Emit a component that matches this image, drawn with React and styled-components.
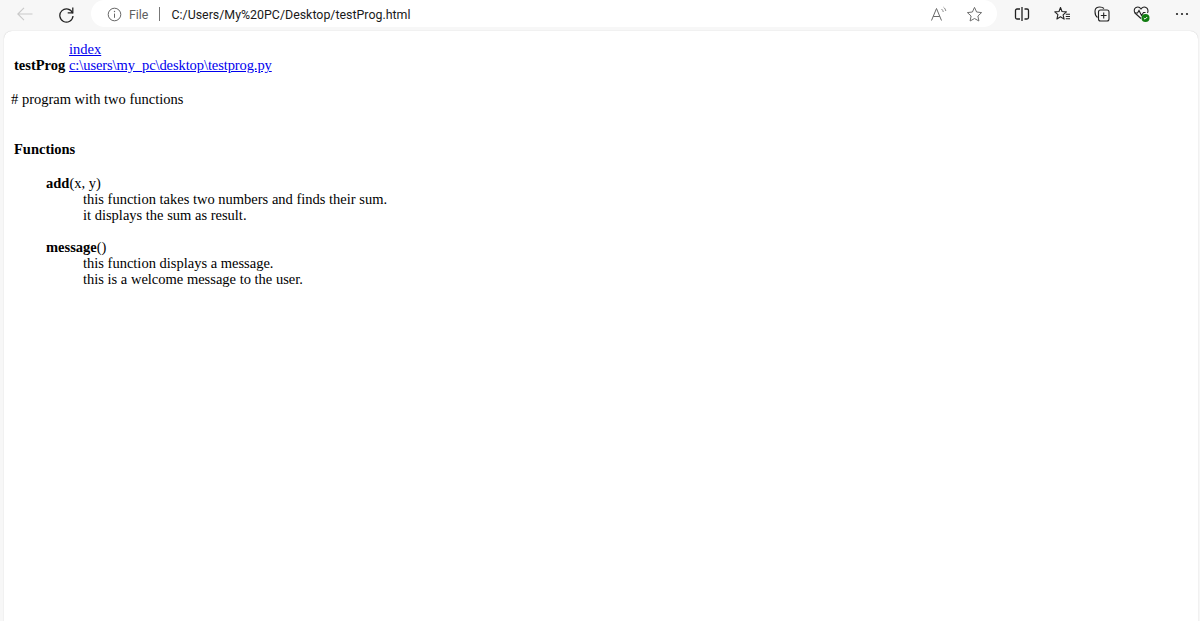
import React from "react";
import styled, { createGlobalStyle } from "styled-components";

const Global = createGlobalStyle`
  html, body { margin: 0; padding: 0; height: 100%; overflow: hidden; background: #f7f7f7; }
  #root { height: 100%; }
`;

const Window = styled.div`
  height: 621px;
  display: flex;
  flex-direction: column;
  background: #f7f7f7;
`;

const Toolbar = styled.header`
  height: 27px;
  padding: 0 0 0 7px;
  display: flex;
  align-items: center;
  flex: none;
`;

const NavButton = styled.div`
  width: 36px;
  height: 27px;
  padding-top: 1px;
  box-sizing: border-box;
  display: flex;
  align-items: center;
  justify-content: center;
  flex: none;
  margin-right: ${(p) => p.$gap || 0}px;
`;

const AddressBar = styled.div`
  width: 906px;
  height: 27px;
  margin-left: 7px;
  background: #fff;
  border-radius: 14px;
  display: flex;
  align-items: center;
  padding: 1px 0 0 16px;
  box-sizing: border-box;
  font-family: Roboto, "Open Sans", sans-serif;
  font-size: 12.4px;
  flex: none;
`;

const Scheme = styled.span`
  color: #5f5f5f;
  margin-left: 7px;
`;

const Separator = styled.span`
  width: 1px;
  height: 14px;
  background: #777;
  margin: 0 11px 0 11px;
`;

const Url = styled.span`
  color: #1a1a1a;
  flex: 1;
`;

const AddressActions = styled.div`
  display: flex;
  align-items: center;
  gap: 18px;
  padding-right: 14px;
`;

const ToolIcons = styled.div`
  display: flex;
  align-items: center;
  margin-left: 5px;
`;

const ToolButton = styled.div`
  width: 40px;
  height: 27px;
  padding-top: 1px;
  box-sizing: border-box;
  display: flex;
  align-items: center;
  justify-content: center;
`;

const Viewport = styled.main`
  flex: 1;
  margin: 4px 2px 0 4px;
  padding: 10px 0 0 0;
  background: #fff;
  border-radius: 8px 8px 0 0;
  box-shadow: 0 0 1px rgba(0, 0, 0, 0.25);
  font-family: "Liberation Serif", "Times New Roman", serif;
  font-size: 14.5px;
  line-height: 16px;
  color: #000;
`;

const Heading = styled.div`
  display: grid;
  grid-template-columns: 61px auto;
  justify-content: start;
  padding-left: 4px;
`;

const Bold = styled.b`
  font-weight: 700;
`;

const HeadingTitle = styled(Bold)`
  padding-left: 6px;
  white-space: nowrap;
`;

const Link = styled.a`
  color: #0000ee;
  text-decoration: underline;
`;

const PathLink = styled(Link)`
  letter-spacing: -0.09px;
`;

const Comment = styled.p`
  margin: 18px 0 0 7px;
`;

const SectionTitle = styled.h2`
  font: inherit;
  font-weight: 700;
  margin: 34px 0 0 10px;
`;

const Entry = styled.dl`
  margin: ${(p) => p.$top}px 0 0 42px;
`;

const EntryName = styled.dt`
  margin: 0;
`;

const EntryDoc = styled.dd`
  margin: 0 0 0 37px;
`;

const ArrowIcon = () => (
  <svg width="20" height="16" viewBox="0 0 20 16" fill="none" stroke="#c9c9c9" strokeWidth="1.1">
    <path d="M17.500 8H2.800M9 1.800 2.800 8 9 14.200" />
  </svg>
);

const RefreshIcon = () => (
  <svg width="17" height="17" viewBox="0 0 17 17" fill="none" stroke="#222" strokeWidth="1.25">
    <path d="M14.600 7.200A6.600 6.600 0 1 0 15 10" />
    <path d="M14.800 1.600v5.200H9.700" />
  </svg>
);

const InfoIcon = () => (
  <svg width="15" height="15" viewBox="0 0 15 15" fill="none" stroke="#666" strokeWidth="1">
    <circle cx="7.500" cy="7.500" r="6.300" />
    <path d="M7.500 6.600v4.200" />
    <circle cx="7.500" cy="4.500" r=".7" fill="#666" stroke="none" />
  </svg>
);

const ReadAloudIcon = () => (
  <svg width="18" height="16" viewBox="0 0 18 16" fill="none" stroke="#6a6a6a" strokeWidth="1">
    <path d="M1.500 14.500 6.500 2.500 11.500 14.500M3.200 10.500h6.600" />
    <path d="M11.500 3c1 .8 1.600 1.800 1.800 3M13.500 1.200c1.300 1 2.100 2.400 2.300 3.800" stroke="#8a8a8a" />
  </svg>
);

const StarIcon = () => (
  <svg width="17" height="17" viewBox="0 0 17 17" fill="none" stroke="#6f6f6f" strokeWidth="1">
    <path d="M8.500 1.400 10.600 6l5 .6-3.700 3.400 1 5-4.400-2.500L4.100 15l1-5L1.400 6.600l5-.6z" strokeLinejoin="round" />
  </svg>
);

const SplitIcon = () => (
  <svg width="16" height="16" viewBox="0 0 16 16" fill="none" stroke="#222" strokeWidth="1.3">
    <path d="M6 3H3a1.500 1.500 0 0 0-1.500 1.500v7A1.500 1.500 0 0 0 3 13h3M10.500 3H13a1.500 1.500 0 0 1 1.500 1.500v7A1.500 1.500 0 0 1 13 13h-2.500M8 1v14" />
  </svg>
);

const FavoritesIcon = () => (
  <svg width="17" height="16" viewBox="0 0 17 16" fill="none" stroke="#222" strokeWidth="1.1">
    <path d="M6.500 1.500 8 5.500l4.400.4-3.300 2.900 1 4.300-3.600-2.300L2.900 13l1-4.300L.8 5.900l4.200-.4z" strokeLinejoin="round" />
    <path d="M11.800 8.200H16M11.800 10.500H16M11.800 12.800H16" />
  </svg>
);

const CollectionsIcon = () => (
  <svg width="16" height="16" viewBox="0 0 16 16" fill="none" stroke="#222" strokeWidth="1.1">
    <path d="M3.500 11.500C2 10.500 1 8 1 5.500 1 3 2 1.500 4 1.200 6 .9 8.500 1.200 10 2.500" />
    <rect x="4.500" y="4" width="10.500" height="11" rx="2" />
    <path d="M9.700 6.500v6M6.800 9.500h5.800" />
  </svg>
);

const HealthIcon = () => (
  <svg width="18" height="18" viewBox="0 0 18 18" fill="none" stroke="#222" strokeWidth="1.1">
    <path d="M8 13.500 2.500 8.500C.5 6.500 1 3.500 3 2.500c2-1 4 0 5 1.500 1-1.500 3.200-2.500 5-1.500 2 1 2.500 3.500 1.500 5.500" />
    <path d="M1.500 8h3l1.500-2.500 2.500 5 2-3h2" />
    <circle cx="12.500" cy="13" r="4" fill="#107c10" stroke="none" />
    <path d="m10.800 13 1.200 1.200 2.200-2.200" stroke="#fff" strokeWidth="1" />
  </svg>
);

const MoreIcon = () => (
  <svg width="14" height="4" viewBox="0 0 14 4" fill="#222">
    <circle cx="2" cy="2" r="1.100" />
    <circle cx="7" cy="2" r="1.100" />
    <circle cx="12" cy="2" r="1.100" />
  </svg>
);

export default function App() {
  return (
    <Window>
      <Global />
      <Toolbar>
        <NavButton $gap={5}><ArrowIcon /></NavButton>
        <NavButton><RefreshIcon /></NavButton>
        <AddressBar>
          <InfoIcon />
          <Scheme>File</Scheme>
          <Separator />
          <Url>C:/Users/My%20PC/Desktop/testProg.html</Url>
          <AddressActions>
            <ReadAloudIcon />
            <StarIcon />
          </AddressActions>
        </AddressBar>
        <ToolIcons>
          <ToolButton><SplitIcon /></ToolButton>
          <ToolButton><FavoritesIcon /></ToolButton>
          <ToolButton><CollectionsIcon /></ToolButton>
          <ToolButton><HealthIcon /></ToolButton>
          <ToolButton><MoreIcon /></ToolButton>
        </ToolIcons>
      </Toolbar>
      <Viewport>
        <Heading>
          <span />
          <Link href="#">index</Link>
          <HeadingTitle>testProg</HeadingTitle>
          <PathLink href="#">c:\users\my_pc\desktop\testprog.py</PathLink>
        </Heading>
        <Comment># program with two functions</Comment>
        <SectionTitle>Functions</SectionTitle>
        <Entry $top={18}>
          <EntryName><Bold>add</Bold>(x, y)</EntryName>
          <EntryDoc>this function takes two numbers and finds their sum.</EntryDoc>
          <EntryDoc>it displays the sum as result.</EntryDoc>
        </Entry>
        <Entry $top={16}>
          <EntryName><Bold>message</Bold>()</EntryName>
          <EntryDoc>this function displays a message.</EntryDoc>
          <EntryDoc>this is a welcome message to the user.</EntryDoc>
        </Entry>
      </Viewport>
    </Window>
  );
}
